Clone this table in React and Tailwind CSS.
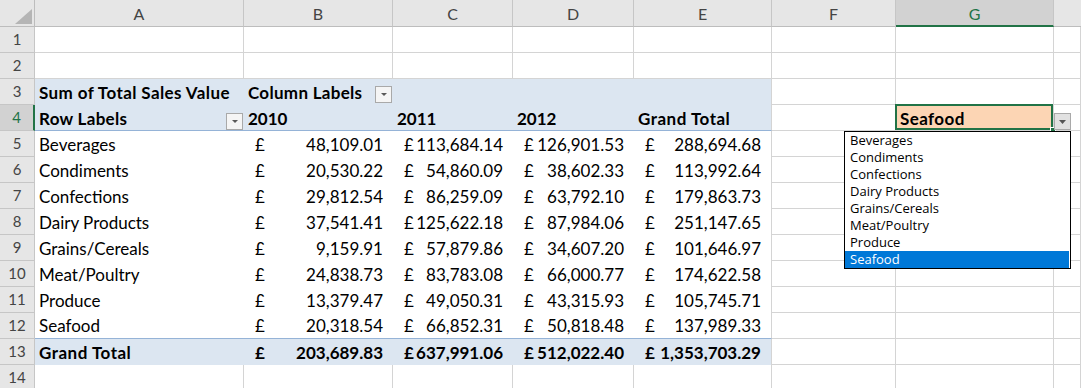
import React from "react";

const data = [
  ["Beverages", "48,109.01", "113,684.14", "126,901.53", "288,694.68"],
  ["Condiments", "20,530.22", "54,860.09", "38,602.33", "113,992.64"],
  ["Confections", "29,812.54", "86,259.09", "63,792.10", "179,863.73"],
  ["Dairy Products", "37,541.41", "125,622.18", "87,984.06", "251,147.65"],
  ["Grains/Cereals", "9,159.91", "57,879.86", "34,607.20", "101,646.97"],
  ["Meat/Poultry", "24,838.73", "83,783.08", "66,000.77", "174,622.58"],
  ["Produce", "13,379.47", "49,050.31", "43,315.93", "105,745.71"],
  ["Seafood", "20,318.54", "66,852.31", "50,818.48", "137,989.33"],
];

const totals = ["203,689.83", "637,991.06", "512,022.40", "1,353,703.29"];

const listItems = [
  "Beverages",
  "Condiments",
  "Confections",
  "Dairy Products",
  "Grains/Cereals",
  "Meat/Poultry",
  "Produce",
  "Seafood",
];

const GRID = "border-r border-b border-[#d4d4d4] bg-white";
const ROWHDR =
  "flex items-center justify-center bg-[#e6e6e6] text-[#444444] text-[15px] border-r border-b border-[#c6c6c6]";
const BLUE = "bg-[#dce6f1]";

function Tri({ w = 6, h = 3, color = "#595959" }) {
  return (
    <svg width={w} height={h} viewBox={`0 0 ${w} ${h}`}>
      <path d={`M0 0H${w}L${w / 2} ${h}Z`} fill={color} />
    </svg>
  );
}

function FilterBtn({ className }) {
  return (
    <div
      className={
        "w-[17px] h-[17px] shrink-0 border border-[#a9a9a9] bg-[#f5f5f5] flex items-center justify-center " +
        className
      }
    >
      <Tri />
    </div>
  );
}

function Money({ value, bold, className }) {
  return (
    <div
      className={
        "flex items-center justify-between pl-[11px] pr-[10px] pt-[1px] whitespace-nowrap " +
        (bold ? "font-bold " : "") +
        className
      }
    >
      <span>£</span>
      <span>{value}</span>
    </div>
  );
}

function RightCols({ selected }) {
  return (
    <>
      <div className={GRID}></div>
      {selected ? (
        <div className="relative flex items-center pl-[4px] pt-[2px] bg-[#fcd5b4] border-r border-b border-[#d4d4d4] font-bold tracking-[0.4px]">
          Seafood
          <div className="absolute -left-[1px] -top-[1px] right-0 bottom-0 border-2 border-[#217346]"></div>
          <div className="absolute -right-[3px] -bottom-[3px] w-[6px] h-[6px] bg-[#217346] border border-white"></div>
        </div>
      ) : (
        <div className={GRID}></div>
      )}
      <div className={GRID}></div>
    </>
  );
}

export default function App() {
  return (
    <div
      className="relative w-[1081px] h-[388px] overflow-hidden bg-white text-black text-[17px]"
      style={{ fontFamily: "Lato, 'Open Sans', sans-serif" }}
    >
      <div className="grid grid-cols-[35px_209px_149px_120px_121px_138px_124px_158px_1fr] grid-rows-[27px_repeat(14,26px)]">
        {/* Column headers */}
        <div className="relative bg-[#e6e6e6] border-r border-b border-[#bdbdbd]">
          <svg className="absolute left-0 top-0" width="35" height="27" viewBox="0 0 35 27">
            <path d="M32 9V24H15Z" fill="#b5b5b5" />
          </svg>
        </div>
        {["A", "B", "C", "D", "E", "F"].map((c) => (
          <div
            key={c}
            className="flex items-center justify-center pt-[2px] bg-[#e6e6e6] text-[#444444] text-[16px] border-r border-b border-r-[#c6c6c6] border-b-[#bdbdbd]"
          >
            {c}
          </div>
        ))}
        <div className="flex items-center justify-center pt-[2px] bg-[#d2d2d2] text-[#217346] text-[16px] border-r border-r-[#c6c6c6] border-b-2 border-b-[#217346]">
          G
        </div>
        <div className="bg-[#e6e6e6] border-b border-[#bdbdbd]"></div>

        {/* Rows 1-2 */}
        {[1, 2].map((r) => (
          <React.Fragment key={r}>
            <div className={ROWHDR}>{r}</div>
            <div className={GRID}></div>
            <div className={GRID}></div>
            <div className={GRID}></div>
            <div className={GRID}></div>
            <div className={GRID}></div>
            <RightCols />
          </React.Fragment>
        ))}

        {/* Row 3 */}
        <div className={ROWHDR}>3</div>
        <div className={"flex items-center pl-[4px] pt-[1px] font-bold tracking-[0.4px] whitespace-nowrap " + BLUE}>
          Sum of Total Sales Value
        </div>
        <div className={"flex items-center justify-between pl-[4px] pr-[1px] pt-[1px] font-bold tracking-[0.3px] whitespace-nowrap " + BLUE}>
          <span>Column Labels</span>
          <FilterBtn className="self-end mb-[2px]" />
        </div>
        <div className={BLUE}></div>
        <div className={BLUE}></div>
        <div className={"border-r border-[#d4d4d4] " + BLUE}></div>
        <RightCols />

        {/* Row 4 */}
        <div className="flex items-center justify-center bg-[#d2d2d2] text-[#217346] text-[15px] border-b border-[#c6c6c6] border-r-2 border-r-[#217346]">
          4
        </div>
        <div className={"flex items-center justify-between pl-[4px] pr-[1px] pt-[2px] font-bold tracking-[0.3px] border-b border-[#95b3d7] " + BLUE}>
          <span>Row Labels</span>
          <FilterBtn className="self-end mb-[0px]" />
        </div>
        <div className={"flex items-center pl-[4px] pt-[2px] font-bold border-b border-[#95b3d7] " + BLUE}>2010</div>
        <div className={"flex items-center pl-[4px] pt-[2px] font-bold border-b border-[#95b3d7] " + BLUE}>2011</div>
        <div className={"flex items-center pl-[4px] pt-[2px] font-bold border-b border-[#95b3d7] " + BLUE}>2012</div>
        <div className={"flex items-center pl-[4px] pt-[2px] font-bold tracking-[0.5px] border-b border-b-[#95b3d7] border-r border-r-[#d4d4d4] " + BLUE}>
          Grand Total
        </div>
        <RightCols selected />

        {/* Data rows 5-12 */}
        {data.map((row, i) => {
          const last = i === data.length - 1;
          const bb = last ? "border-b border-[#95b3d7] " : "";
          return (
            <React.Fragment key={row[0]}>
              <div className={ROWHDR}>{i + 5}</div>
              <div className={"flex items-center pl-[4px] pt-[1px] bg-white " + bb}>{row[0]}</div>
              <Money value={row[1]} className={"bg-white " + bb} />
              <Money value={row[2]} className={"bg-white " + bb} />
              <Money value={row[3]} className={"bg-white " + bb} />
              <Money
                value={row[4]}
                className={
                  "bg-white border-r border-r-[#d4d4d4] " +
                  (last ? "border-b border-b-[#95b3d7]" : "")
                }
              />
              <RightCols />
            </React.Fragment>
          );
        })}

        {/* Row 13 */}
        <div className={ROWHDR}>13</div>
        <div className={"flex items-center pl-[4px] pt-[2px] font-bold tracking-[0.5px] " + BLUE}>Grand Total</div>
        <Money value={totals[0]} bold className={BLUE} />
        <Money value={totals[1]} bold className={BLUE} />
        <Money value={totals[2]} bold className={BLUE} />
        <Money value={totals[3]} bold className={"border-r border-[#d4d4d4] " + BLUE} />
        <RightCols />

        {/* Row 14 */}
        <div className={ROWHDR}>14</div>
        <div className={GRID}></div>
        <div className={GRID}></div>
        <div className={GRID}></div>
        <div className={GRID}></div>
        <div className={GRID}></div>
        <RightCols />
      </div>

      {/* Validation dropdown arrow */}
      <div className="absolute left-[1054px] top-[113px] w-[17px] h-[17px] border border-[#a9a9a9] bg-[#e1e1e1] flex items-center justify-center">
        <Tri w={7} h={4} color="#555555" />
      </div>

      {/* Validation dropdown list */}
      <div
        className="absolute left-[844px] top-[131px] w-[227px] h-[138px] border border-black bg-white text-[13px]"
        style={{ fontFamily: "'Open Sans', 'Noto Sans', sans-serif" }}
      >
        {listItems.map((it, i) => (
          <div
            key={it}
            className={
              "h-[17px] leading-[17px] pl-[5px] whitespace-nowrap " +
              (i === listItems.length - 1 ? "bg-[#0078d7] text-white mr-[1px]" : "text-black")
            }
          >
            {it}
          </div>
        ))}
      </div>
    </div>
  );
}
